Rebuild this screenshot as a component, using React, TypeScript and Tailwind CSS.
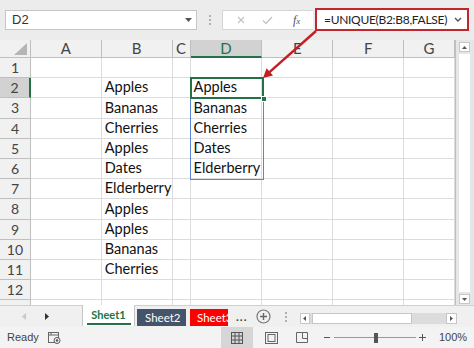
import React from 'react';

const columns = [
  { key: 'A', w: 'w-[71px]' },
  { key: 'B', w: 'w-[71px]' },
  { key: 'C', w: 'w-[18px]' },
  { key: 'D', w: 'w-[72px]' },
  { key: 'E', w: 'w-[71px]' },
  { key: 'F', w: 'w-[71px]' },
  { key: 'G', w: 'w-[51px]' },
];

const colB: Record<number, string> = {
  2: 'Apples',
  3: 'Bananas',
  4: 'Cherries',
  5: 'Apples',
  6: 'Dates',
  7: 'Elderberry',
  8: 'Apples',
  9: 'Apples',
  10: 'Bananas',
  11: 'Cherries',
};

const colD: Record<number, string> = {
  2: 'Apples',
  3: 'Bananas',
  4: 'Cherries',
  5: 'Dates',
  6: 'Elderberry',
};

// row 13 is only a sliver at the bottom edge
const rows = [1, 2, 3, 4, 5, 6, 7, 8, 9, 10, 11, 12, 13];

const FormulaBar = () => (
  <div className="flex items-start h-[40px] pt-[8px] bg-[#ececec]">
    {/* name box */}
    <div className="ml-[5px] mt-[2px] w-[192px] h-[20px] bg-white border border-[#c6c6c6] flex items-center justify-between pl-[6px] pr-[4px]">
      <span className="text-[13px] text-[#333] font-['Liberation_Sans',sans-serif]">D2</span>
      <svg width="7" height="4" viewBox="0 0 7 4">
        <polygon points="0,0 7,0 3.5,4" fill="#555" />
      </svg>
    </div>
    {/* separator dots */}
    <div className="w-[25px] h-[24px] flex flex-col items-center justify-center gap-[2px]">
      <span className="w-[2px] h-[2px] bg-[#b0b0b0]" />
      <span className="w-[2px] h-[2px] bg-[#b0b0b0]" />
      <span className="w-[2px] h-[2px] bg-[#b0b0b0]" />
    </div>
    {/* cancel / enter / fx */}
    <div className="mt-[2px] w-[91px] h-[20px] bg-white border border-[#d6d6d6] border-r-0 flex items-center">
      <svg className="ml-[14px]" width="8" height="8" viewBox="0 0 8 8">
        <path d="M1 1 L7 7 M7 1 L1 7" stroke="#c4c4c4" strokeWidth="1.2" />
      </svg>
      <svg className="ml-[17px]" width="11" height="9" viewBox="0 0 11 9">
        <path d="M1 4.5 L4 7.5 L10 1" stroke="#c4c4c4" strokeWidth="1.3" fill="none" />
      </svg>
      <span className="ml-[20px] text-[12px] italic text-[#555] font-['Liberation_Serif',serif]">
        f<span className="text-[9px]">x</span>
      </span>
    </div>
    {/* formula box */}
    <div className="ml-[2px] w-[154px] h-[23px] bg-white border-2 border-[#c0262d] flex items-center justify-between pl-[7px] pr-[5px]">
      <span className="text-[12px] text-[#222] tracking-[-0.3px] whitespace-nowrap">=UNIQUE(B2:B8,FALSE)</span>
      <svg width="8" height="5" viewBox="0 0 8 5">
        <path d="M1 1 L4 4 L7 1" stroke="#555" strokeWidth="1.4" fill="none" />
      </svg>
    </div>
  </div>
);

const Grid = () => (
  <div className="w-[456px] h-[265px] overflow-hidden bg-white border-r border-[#bfbfbf]">
    {/* header row */}
    <div className="flex h-[18px] bg-[#f1f1f1]">
      <div className="w-[31px] h-full border-r border-b border-[#bfbfbf] flex items-end justify-end pr-[3px] pb-[2px]">
        <svg width="13" height="12" viewBox="0 0 13 12">
          <polygon points="13,0 13,12 0,12" fill="#b5b5b5" />
        </svg>
      </div>
      {columns.map((c) => (
        <div
          key={c.key}
          className={
            c.key === 'D'
              ? `${c.w} h-full bg-[#d2d2d2] border-r border-[#bfbfbf] border-b-2 border-b-[#217346] flex items-center justify-center text-[15px] text-[#217346]`
              : `${c.w} h-full border-r border-b border-[#bfbfbf] flex items-center justify-center text-[15px] text-[#444]`
          }
        >
          {c.key}
        </div>
      ))}
    </div>
    {/* body */}
    <div className="relative">
      {rows.map((r) => (
        <div key={r} className="flex h-[20.2px]">
          <div
            className={
              r === 2
                ? 'w-[31px] h-full bg-[#d2d2d2] border-r-2 border-[#217346] border-b border-b-[#bfbfbf] flex items-center justify-center text-[14px] text-[#444]'
                : 'w-[31px] h-full bg-[#f1f1f1] border-r border-b border-[#bfbfbf] flex items-center justify-center text-[14px] text-[#444]'
            }
          >
            {r < 13 ? r : ''}
          </div>
          {columns.map((c) => (
            <div
              key={c.key}
              className={`${c.w} h-full border-r border-b border-[#dcdcdc] flex items-end pl-[3px] pb-[1px] text-[14.5px] leading-[18px] text-[#111] whitespace-nowrap overflow-hidden`}
            >
              {c.key === 'B' ? colB[r] : c.key === 'D' ? colD[r] : ''}
            </div>
          ))}
        </div>
      ))}
      {/* spill range */}
      <div className="absolute left-[190px] top-[20px] w-[74px] h-[102px] border border-[#5b84d4] pointer-events-none" />
      {/* active cell */}
      <div className="absolute left-[190px] top-[19px] w-[74px] h-[22px] border-2 border-[#217346] pointer-events-none" />
      <div className="absolute left-[261px] top-[38px] w-[6px] h-[6px] bg-[#217346] border border-white pointer-events-none" />
    </div>
  </div>
);

const VScroll = () => (
  <div className="w-[18px] h-[265px] bg-[#e6e6e6] flex flex-col items-start pl-[3px] pt-[2px]">
    <div className="w-[11px] h-[10px] bg-white border border-[#c6c6c6] flex items-center justify-center">
      <svg width="5" height="3" viewBox="0 0 5 3">
        <polygon points="0,3 5,3 2.5,0" fill="#555" />
      </svg>
    </div>
    <div className="w-[11px] flex-1 my-[2px] bg-white" />
    <div className="w-[11px] h-[10px] mb-[1px] bg-white border border-[#c6c6c6] flex items-center justify-center">
      <svg width="5" height="3" viewBox="0 0 5 3">
        <polygon points="0,0 5,0 2.5,3" fill="#555" />
      </svg>
    </div>
  </div>
);

const TabBar = () => (
  <div className="flex items-start h-[22px] bg-[#f0f0f0] border-t border-[#d0d0d0]">
    <div className="w-[82px] h-full flex items-center">
      <svg className="ml-[22px]" width="4" height="7" viewBox="0 0 4 7">
        <polygon points="4,0 4,7 0,3.5" fill="#c8c8c8" />
      </svg>
      <svg className="ml-[19px]" width="4" height="7" viewBox="0 0 4 7">
        <polygon points="0,0 0,7 4,3.5" fill="#333" />
      </svg>
    </div>
    <div className="w-[53px] h-[21px] -mt-px bg-white border-x border-[#c6c6c6] flex flex-col items-center justify-center">
      <span className="text-[11px] font-bold text-[#217346] leading-[14px] mt-[2px]">Sheet1</span>
      <span className="mt-[1px] w-[44px] h-[2px] bg-[#217346]" />
    </div>
    <div className="ml-[2px] mt-[3px] w-[49px] h-[17px] bg-[#44546a] flex items-center pl-[8px]">
      <span className="text-[11.5px] text-white">Sheet2</span>
    </div>
    <div className="ml-[4px] mt-[3px] w-[38px] h-[17px] bg-[#ff0000] flex items-center pl-[7px] overflow-hidden whitespace-nowrap">
      <span className="text-[11.5px] text-white">Sheet3</span>
    </div>
    <div className="ml-[8px] h-full flex items-center text-[12px] text-[#444] font-bold tracking-[1px]">...</div>
    <div className="ml-[8px] h-full flex items-center">
      <svg width="15" height="15" viewBox="0 0 15 15">
        <circle cx="7.5" cy="7.5" r="6.5" fill="none" stroke="#777" strokeWidth="1.2" />
        <path d="M7.5 4 V11 M4 7.5 H11" stroke="#666" strokeWidth="1.4" />
      </svg>
    </div>
    <div className="ml-[14px] h-full flex flex-col items-center justify-center gap-[2px]">
      <span className="w-[2px] h-[2px] bg-[#b0b0b0]" />
      <span className="w-[2px] h-[2px] bg-[#b0b0b0]" />
      <span className="w-[2px] h-[2px] bg-[#b0b0b0]" />
    </div>
    {/* horizontal scrollbar */}
    <div className="ml-[13px] mt-[7px] w-[157px] h-[11px] flex bg-[#dcdcdc]">
      <div className="w-[10px] h-full bg-white border border-[#c6c6c6] flex items-center justify-center">
        <svg width="3" height="5" viewBox="0 0 3 5">
          <polygon points="3,0 3,5 0,2.5" fill="#555" />
        </svg>
      </div>
      <div className="ml-[2px] w-[100px] h-full bg-white border border-[#c6c6c6]" />
      <div className="flex-1" />
      <div className="w-[11px] h-full bg-white border border-[#c6c6c6] flex items-center justify-center">
        <svg width="3" height="5" viewBox="0 0 3 5">
          <polygon points="0,0 0,5 3,2.5" fill="#555" />
        </svg>
      </div>
    </div>
  </div>
);

const StatusBar = () => (
  <div className="flex items-center h-[21px] bg-[#f3f3f3] font-['Liberation_Sans',sans-serif]">
    <span className="ml-[7px] w-[26px] text-[11px] text-[#444]">Ready</span>
    <svg className="ml-[15px]" width="13" height="12" viewBox="0 0 13 12">
      <rect x="0.5" y="0.5" width="10" height="10" fill="none" stroke="#666" />
      <path d="M0.5 3 H10.5 M3 0.5 V3" stroke="#666" />
      <circle cx="9" cy="8.5" r="3" fill="#f3f3f3" stroke="#555" />
      <circle cx="9" cy="8.5" r="1.2" fill="#555" />
    </svg>
    <div className="ml-[160px] w-[32px] h-full bg-[#d6d6d6] flex items-center justify-center">
      <svg width="12" height="12" viewBox="0 0 12 12">
        <rect x="0.5" y="0.5" width="11" height="11" fill="none" stroke="#555" />
        <path d="M4 0.5 V11.5 M8 0.5 V11.5 M0.5 4 H11.5 M0.5 8 H11.5" stroke="#555" />
      </svg>
    </div>
    <svg className="ml-[12px]" width="13" height="12" viewBox="0 0 13 12">
      <rect x="0.5" y="0.5" width="12" height="11" fill="none" stroke="#666" />
      <rect x="3" y="2.5" width="7" height="7" fill="none" stroke="#666" />
    </svg>
    <svg className="ml-[18px]" width="12" height="11" viewBox="0 0 12 11">
      <path d="M0.5 0.5 H11.5 V10.5 H0.5 Z M6.5 0.5 V6.5 H11.5" fill="none" stroke="#666" />
    </svg>
    <span className="ml-[16px] w-[6px] h-[1px] bg-[#555]" />
    <div className="ml-[4px] w-[82px] flex items-center relative">
      <span className="w-full h-[1px] bg-[#9a9a9a]" />
      <span className="absolute left-[40px] w-[4px] h-[10px] bg-[#555]" />
    </div>
    <svg className="ml-[3px]" width="7" height="7" viewBox="0 0 7 7">
      <path d="M3.5 0 V7 M0 3.5 H7" stroke="#555" strokeWidth="1" />
    </svg>
    <span className="ml-[13px] text-[11px] text-[#444]">100%</span>
  </div>
);

export default function App() {
  return (
    <div className="relative w-[474px] h-[348px] overflow-hidden bg-[#f0f0f0] font-[Lato,sans-serif]">
      <FormulaBar />
      <div className="flex">
        <Grid />
        <VScroll />
      </div>
      <TabBar />
      <StatusBar />
      {/* red callout arrow */}
      <svg className="absolute left-0 top-0 pointer-events-none" width="474" height="348" viewBox="0 0 474 348">
        <line x1="316" y1="31" x2="269.5" y2="72.2" stroke="#c41e24" strokeWidth="2.4" />
        <polygon points="263,78 273,75.4 266.6,68.2" fill="#c41e24" />
      </svg>
    </div>
  );
}
